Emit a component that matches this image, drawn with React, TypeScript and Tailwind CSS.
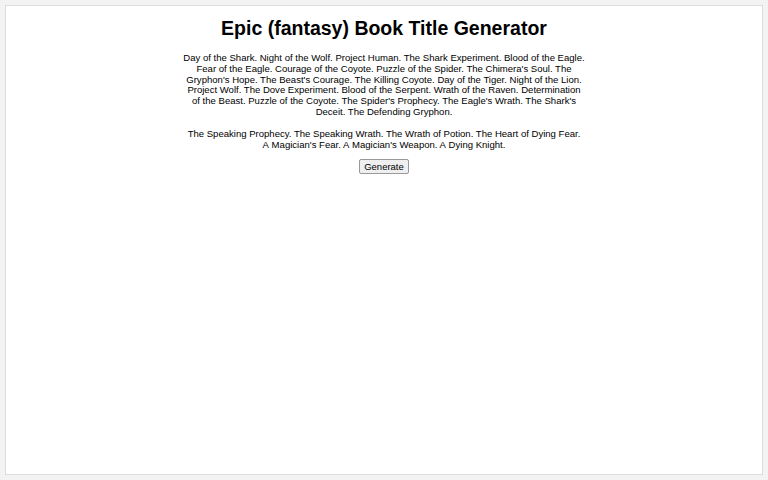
import React, { useState } from "react";

const subjects = ["Shark", "Wolf", "Eagle", "Coyote", "Spider", "Chimera", "Gryphon", "Beast", "Tiger", "Lion", "Dove", "Serpent", "Raven"];

const firstTitles =
    "Day of the Shark. Night of the Wolf. Project Human. The Shark Experiment. Blood of the Eagle. Fear of the Eagle. Courage of the Coyote. Puzzle of the Spider. The Chimera's Soul. The Gryphon's Hope. The Beast's Courage. The Killing Coyote. Day of the Tiger. Night of the Lion. Project Wolf. The Dove Experiment. Blood of the Serpent. Wrath of the Raven. Determination of the Beast. Puzzle of the Coyote. The Spider's Prophecy. The Eagle's Wrath. The Shark's Deceit. The Defending Gryphon.";

// titres courts, "A" reste collé au mot suivant
const secondTitles =
    "The Speaking Prophecy. The Speaking Wrath. The Wrath of Potion. The Heart of Dying Fear. A\u00a0Magician's Fear. A\u00a0Magician's Weapon. A\u00a0Dying Knight.";

const patterns = [
    (s: string) => `Day of the ${s}.`,
    (s: string) => `Night of the ${s}.`,
    (s: string) => `The ${s} Experiment.`,
    (s: string) => `Blood of the ${s}.`,
    (s: string) => `The ${s}'s Wrath.`,
    (s: string) => `Puzzle of the ${s}.`,
];

const pick = <T,>(arr: T[]) => arr[Math.floor(Math.random() * arr.length)];

const App = () => {
    const [titles, setTitles] = useState<string>(firstTitles);

    // Nouvelle série de titres
    const generate = () => {
        const list = Array.from({ length: 20 }, () => pick(patterns)(pick(subjects)));
        setTitles(list.join(" "));
    };

    return (
        <div className="min-h-[480px] bg-[#f3f3f3] p-[5px] font-['Liberation_Sans',Arial,sans-serif] text-black">
            <div className="h-[470px] border border-[#dddddd] bg-white">
                <h1 className="mt-[10px] text-center text-[19.5px] font-bold leading-[24px]">
                    Epic (fantasy) Book Title Generator
                </h1>
                <div className="mx-auto mt-[13px] w-[402px] text-center text-[9.55px] leading-[10.8px]">
                    <p>{titles}</p>
                    <p className="mt-[11px]">{secondTitles}</p>
                    <button
                        onClick={generate}
                        className="mt-[9px] rounded-[2px] border border-[#999999] bg-[#efefef] px-[4px] py-[1px] text-[9.5px] leading-[11px]"
                    >
                        Generate
                    </button>
                </div>
            </div>
        </div>
    );
};

export default App;
